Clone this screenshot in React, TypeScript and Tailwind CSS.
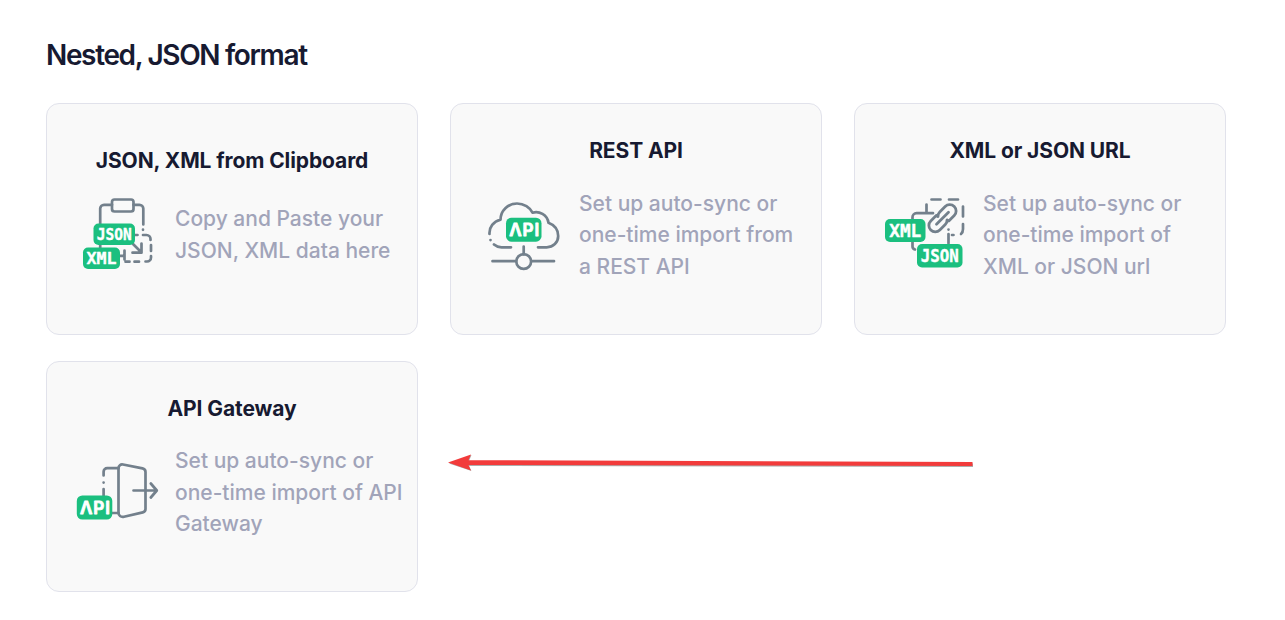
import React from 'react';

interface BadgeProps {
  x: number;
  y: number;
  width: number;
  height: number;
  label: string;
  textWidth: number;
  size: number;
  baseline: number;
}

const Badge: React.FC<BadgeProps> = ({ x, y, width, height, label, textWidth, size, baseline }) => (
  <g>
    <rect x={x} y={y} width={width} height={height} rx="5" fill="#1bbf7f" stroke="none" />
    <text
      x={x + (width - textWidth) / 2}
      y={baseline}
      textLength={textWidth}
      lengthAdjust="spacingAndGlyphs"
      fontSize={size}
      fontWeight="700"
      fill="#fff"
      stroke="#fff"
      strokeWidth="0.4"
      className="font-['DejaVu_Sans_Mono',monospace]"
    >
      {label}
    </text>
  </g>
);

// The A has no crossbar, so it is set as a lambda
const ApiBadge = ({ x, y }: { x: number; y: number }) => (
  <g>
    <rect x={x} y={y} width="35.5" height="24" rx="5.5" fill="#1bbf7f" stroke="none" />
    <text
      x={x + 3.2}
      y={y + 18.2}
      textLength="30"
      lengthAdjust="spacing"
      fontSize="17"
      fontWeight="600"
      fill="#fff"
      stroke="#fff"
      strokeWidth="0.9"
      className="font-['Inter',sans-serif]"
    >
      ΛPI
    </text>
  </g>
);

const IconFrame = ({ viewBox, children }: { viewBox: string; children: React.ReactNode }) => (
  <svg
    width="100"
    height="75"
    viewBox={viewBox}
    fill="none"
    stroke="#73808c"
    strokeWidth="2.7"
    strokeLinecap="round"
    strokeLinejoin="round"
    className="shrink-0"
  >
    {children}
  </svg>
);

const ClipboardIcon = () => (
  <IconFrame viewBox="-4 7.5 100 75">
    <rect x="40" y="10" width="21.5" height="12" rx="2.5" />
    <path d="M40 15.3h-8a3.8 3.8 0 0 0-3.8 3.8V59M61.5 15.3h6a3.8 3.8 0 0 1 3.8 3.8V35M71 40.2v.1" />
    <path d="M65.5 45.5h-2.5M71 45.5h3.5a4 4 0 0 1 4 4v1M79 55.5v6M79 66.5v1.5a4 4 0 0 1-4 4h-1.5M67 72.2h-4.5M57.5 72.2h-4M52.5 61v9M48 66.3h3" />
    <path d="M61 54.5l8.5 8.5M69.5 54v9.2h-9" />
    <Badge x={21.5} y={34} width={41.5} height={21.5} label="JSON" textWidth={35} size={16.5} baseline={50.8} />
    <Badge x={11} y={58} width={37} height={21.5} label="XML" textWidth={30} size={16.5} baseline={74.8} />
  </IconFrame>
);

const CloudApiIcon = () => (
  <IconFrame viewBox="-3 7.5 100 75">
    <path d="M14.5 44.5c-.5-7 4-12.5 11-14.2C25.5 21 33 14 42 14c7 0 13 4.2 15.5 9.2 6.5-2.2 14.8 2 16 10C79.5 35.5 83.2 40 83.2 46.5c0 6.5-5 11.3-11.5 11.3H63" />
    <path d="M15.5 50.5v.1M19 55c2.3 2 4.5 2.8 7.5 2.8h9.5" />
    <path d="M48.7 57v8M17.5 71.7H41M56.5 71.7H79" />
    <circle cx="48.7" cy="72" r="7.4" />
    <ApiBadge x={31} y={28.2} />
  </IconFrame>
);

const UrlIcon = () => (
  <IconFrame viewBox="1 7.5 100 75">
    <path d="M56.5 10h9M74 10h9M88 17v10M88 34.5v5c0 2.500-.5 3.800-2 5M77 45.500h1.500M51.500 15v8.500M58 23.700H41.500a4 4 0 0 0-4 4V57c0 1.500 1 2.600 2.500 3M73.500 40v.1M73.500 44.500V54" />
    <g transform="translate(67.5 28.8) rotate(-45)" strokeWidth="2.8">
      <path d="M-2.5-6.4h-7.700a6.400 6.400 0 0 0 0 12.800h7.700a6 6 0 0 0 4.500-2M2.500 6.400h7.700a6.400 6.400 0 0 0 0-12.800h-7.700a6 6 0 0 0-4.500 2M-8.500 0H8.500" />
    </g>
    <Badge x={10} y={29.5} width={40.5} height={23} label="XML" textWidth={32} size={17.5} baseline={47.3} />
    <Badge x={42} y={54.5} width={45.5} height={23.5} label="JSON" textWidth={38} size={17.5} baseline={72.5} />
  </IconFrame>
);

const GatewayIcon = () => (
  <IconFrame viewBox="0 5 100 75">
    <path d="M50.5 18.2H39.2a3.6 3.6 0 0 0-3.6 3.6v3.7M35.6 32.5v.1M35.6 39v7M44 63h6.5" />
    <path d="M50.5 18.5c0-3 2.2-4.5 4.5-4l19.5 3.9c1.8.4 3 1.5 3 3.5V59c0 2-1 3-2.7 3.4L56 66.7c-3.2.7-5.5-1.3-5.5-4z" />
    <path d="M65.5 40.5H88.5M82.8 33.5l6 7-6 7" />
    <ApiBadge x={8.8} y={45.5} />
  </IconFrame>
);

const sources = [
  { title: 'JSON, XML from Clipboard', lines: ['Copy and Paste your', 'JSON, XML data here'], icon: <ClipboardIcon /> },
  { title: 'REST API', lines: ['Set up auto-sync or', 'one-time import from', 'a REST API'], icon: <CloudApiIcon /> },
  { title: 'XML or JSON URL', lines: ['Set up auto-sync or', 'one-time import of', 'XML or JSON url'], icon: <UrlIcon /> },
  { title: 'API Gateway', lines: ['Set up auto-sync or', 'one-time import of API', 'Gateway'], icon: <GatewayIcon /> },
];

const App: React.FC = () => {
  return (
    <div className="relative h-[620px] w-[1285px] overflow-hidden bg-white px-[46px] pt-[35px] font-['Inter',sans-serif] text-[#171a31]">
      <h2 className="text-[28px] leading-10 font-semibold tracking-[-1.35px]">Nested, JSON format</h2>

      <div className="mt-7 grid grid-cols-[372px_372px_372px] grid-rows-[232px_231px] gap-x-8 gap-y-[26px]">
        {sources.map((source) => (
          <div
            key={source.title}
            className="flex flex-col justify-center rounded-[13px] border border-[#e1e2eb] bg-[#f9f9f9] pb-[21px]"
          >
            <h3 className="mb-[21px] text-center text-[21px] leading-[31.5px] font-bold tracking-[-0.1px]">{source.title}</h3>
            <div className="flex items-center gap-[7px] pl-[21px]">
              {source.icon}
              <p className="text-[21px] leading-[31.5px] font-medium whitespace-nowrap text-[#a1a4b9]">
                {source.lines.map((line) => (
                  <span key={line} className="block">{line}</span>
                ))}
              </p>
            </div>
          </div>
        ))}
      </div>

      {/* Arrow pointing at API Gateway */}
      <svg className="absolute top-[450px] left-[444px]" width="534" height="26" viewBox="0 0 534 26">
        <path d="M5 13.5L27.5 21L25 16L529 17V13.5L25 11L27.5 5Z" fill="#777" opacity="0.6" />
        <path d="M4 12.5L27 4.5L24.5 10.2L528.5 12V16L24.5 15L27 20.5Z" fill="#f23b3b" />
      </svg>
    </div>
  );
};

export default App;
